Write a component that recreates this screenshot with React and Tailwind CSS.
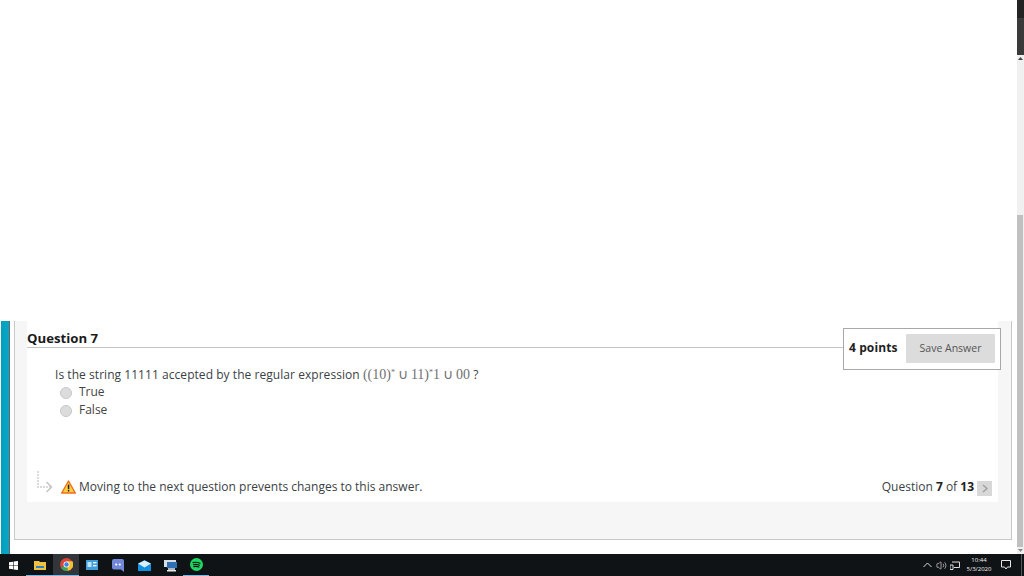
import { Volume2 } from 'lucide-react';

const font = { fontFamily: '"Open Sans", sans-serif' };

function WarningIcon() {
  return (
    <svg width="15" height="14" viewBox="0 0 15 14" className="shrink-0">
      <path d="M7.500 1 L14.300 13 H0.700 Z" fill="#fbcf45" stroke="#ef6c1a" strokeWidth="1.400" strokeLinejoin="round" />
      <rect x="6.800" y="4.600" width="1.500" height="4.600" fill="#222" />
      <rect x="6.800" y="10" width="1.500" height="1.500" fill="#222" />
    </svg>
  );
}

function ArrowMark() {
  return (
    <svg width="16" height="23" viewBox="0 0 16 23" className="shrink-0">
      <path d="M1 1 V17 H13" fill="none" stroke="#cfcfcf" strokeWidth="1.500" strokeDasharray="2 1" />
      <path d="M9.500 12 L14.500 17 L9.500 22" fill="none" stroke="#c4c4c4" strokeWidth="1.500" />
    </svg>
  );
}

function Radio() {
  return <span className="w-[12px] h-[12px] mt-[4px] -ml-[1px] rounded-full bg-[#dcdcdc] border border-[#c8c8c8] shrink-0" />;
}

function Taskbar() {
  return (
    <div className="h-[22px] bg-[#101316] flex items-center text-white">
      <div className="w-[26px] flex justify-center">
        <svg width="9" height="9" viewBox="0 0 9 9">
          <path d="M0 1.300 L4 .7 V4.200 H0 Z M4.600 .6 L9 0 V4.200 H4.600 Z M0 4.800 H4 V8.300 L0 7.700 Z M4.600 4.800 H9 V9 L4.600 8.400 Z" fill="#fff" />
        </svg>
      </div>
      <div className="w-[27px] h-full flex items-center justify-center border-b border-[#76b9ed]">
        <svg width="12" height="10" viewBox="0 0 12 10">
          <path d="M0 1 H5 L6 2 H12 V10 H0 Z" fill="#f0c040" />
          <rect x="2" y="6" width="8" height="2" fill="#2f7fc4" />
        </svg>
      </div>
      <div className="w-[26px] h-full flex items-center justify-center bg-[#32363a] border-b border-[#76b9ed]">
        <svg width="13" height="13" viewBox="0 0 14 14">
          <circle cx="7" cy="7" r="7" fill="#d8453a" />
          <path d="M7 7 L1 10.500 A7 7 0 0 0 8.500 13.800 Z" fill="#3aa757" />
          <path d="M7 3.500 H13.400 A7 7 0 0 1 8.500 13.800 Z" fill="#f3c22e" />
          <circle cx="7" cy="7" r="3.200" fill="#fff" />
          <circle cx="7" cy="7" r="2.400" fill="#3f7fe8" />
        </svg>
      </div>
      <div className="w-[26px] flex justify-center">
        <svg width="12" height="10" viewBox="0 0 12 10">
          <rect width="12" height="10" fill="#3f9fdc" />
          <rect x="1.500" y="2" width="4" height="5" fill="#bfe3f7" />
          <rect x="7" y="2" width="3.500" height="1.400" fill="#e6f5fd" />
          <rect x="7" y="5" width="3.500" height="1.400" fill="#e6f5fd" />
        </svg>
      </div>
      <div className="w-[26px] flex justify-center">
        <svg width="12" height="13" viewBox="0 0 12 13">
          <path d="M2 0 H10 A2 2 0 0 1 12 2 V13 L9 10.500 H2 A2 2 0 0 1 0 8.500 V2 A2 2 0 0 1 2 0 Z" fill="#7289da" />
          <circle cx="4.200" cy="5.500" r="1.100" fill="#fff" />
          <circle cx="7.800" cy="5.500" r="1.100" fill="#fff" />
        </svg>
      </div>
      <div className="w-[26px] flex justify-center">
        <svg width="13" height="11" viewBox="0 0 13 11">
          <path d="M0 4 L6.500 0 L13 4 V11 H0 Z" fill="#1391e0" />
          <path d="M0 3.500 L6.500 7.500 L13 3.500 L6.500 .5 Z" fill="#d9f0fc" />
        </svg>
      </div>
      <div className="w-[26px] flex justify-center">
        <svg width="13" height="13" viewBox="0 0 13 13">
          <rect x="0" y="1" width="12" height="7" fill="#d7dee6" />
          <rect x="3" y="3" width="10" height="6" fill="#2e6fb3" />
          <rect x="4" y="9" width="7" height="2" fill="#aeb6be" />
          <rect x="3" y="11" width="9" height="1.500" fill="#e8e8e8" />
        </svg>
      </div>
      <div className="w-[26px] h-full flex items-center justify-center border-b border-[#76b9ed]">
        <svg width="13" height="13" viewBox="0 0 13 13">
          <circle cx="6.500" cy="6.500" r="6.500" fill="#1ed760" />
          <path d="M3 4.600 Q6.500 3.600 10 5.200 M3.400 6.700 Q6.500 5.900 9.400 7.200 M3.800 8.600 Q6.500 8 8.900 9.100" fill="none" stroke="#101316" strokeWidth="1.100" strokeLinecap="round" />
        </svg>
      </div>
      <div className="flex-1" />
      <svg width="9" height="6" viewBox="0 0 9 6" className="mr-[4px]">
        <path d="M.5 5 L4.500 1 L8.500 5" fill="none" stroke="#ddd" strokeWidth="1" />
      </svg>
      <Volume2 size={11} strokeWidth={1.500} className="text-[#ddd] mr-[3px]" />
      <svg width="10" height="9" viewBox="0 0 10 9" className="mr-[1px]">
        <path d="M2 1 H9.500 V6.500 H4 M0 4 H3 V8.500 H0 Z" fill="none" stroke="#ddd" strokeWidth="1" />
      </svg>
      <div className="w-[36px] flex flex-col items-center text-[6px] leading-[9px] text-[#f0f0f0]" style={font}>
        <span>10:44</span>
        <span>5/3/2020</span>
      </div>
      <div className="w-[18px] flex justify-center">
        <svg width="10" height="10" viewBox="0 0 10 10">
          <path d="M.5 .5 H9.500 V7 H6.500 L5 9 L3.500 7 H.5 Z" fill="none" stroke="#e8e8e8" strokeWidth="1" />
        </svg>
      </div>
      <div className="w-[6px]" />
      <div className="w-[3px] h-full border-l border-[#555]" />
    </div>
  );
}

export default function App() {
  return (
    <div className="w-[1024px] h-[576px] flex flex-col overflow-hidden bg-white text-[#333]" style={font}>
      <div className="flex-1 flex min-h-0">
        <div className="flex-1 flex flex-col min-w-0">
          <div className="h-[321px] shrink-0" />
          <div className="flex-1 flex min-h-0">
            <div className="w-[1px] bg-white" />
            <div className="w-[9px] bg-gradient-to-r from-[#00a0c0] to-[#0aa6c4] border-r border-[#666]" />
            <div className="flex-1 flex flex-col pl-[4px] pr-[5px] min-w-0">
              <div className="h-[219px] border-l border-r border-b border-[#c8c8c8] bg-[#f6f6f6] pl-[12px] pr-[13px] flex">
                <div className="relative flex-1 h-[181px] bg-white flex flex-col">
                  <div className="pt-[8px] h-[27px] border-b border-[#c4c4c4] text-[13.200px] leading-[18px] font-bold text-[#1a1a1a]">
                    Question 7
                  </div>
                  <div className="absolute left-[816px] top-[7px] w-[158px] h-[42px] border border-[#a8a8a8] bg-white flex items-start pt-[5px] pl-[5px] gap-[9px]">
                    <span className="w-[48px] leading-[27px] text-[12px] font-bold text-[#1f1f1f] whitespace-nowrap tracking-[0.1px]">4 points</span>
                    <span className="w-[89px] h-[29px] bg-[#dcdcdc] rounded-[1px] flex items-center justify-center text-[10.500px] text-[#555]">
                      Save Answer
                    </span>
                  </div>
                  <div className="pl-[28px] mt-[18px] text-[12px] leading-[18px] whitespace-nowrap text-[#3a3f45] tracking-[0.05px]">
                    Is the string 11111 accepted by the regular expression{' '}
                    <span className="text-[#707070] text-[14px] tracking-normal" style={{ fontFamily: '"Liberation Serif", serif' }}>
                      ((10)<sup className="text-[8px] top-[-4px]">*</sup><span className="mx-[3px]">∪</span>11)<sup className="text-[8px] top-[-4px]">*</sup>1<span className="mx-[3px]">∪</span>00
                    </span>{' '}
                    ?
                  </div>
                  <div className="pl-[34px] -mt-[1px] flex flex-col text-[12px] leading-[18px] text-[#444]">
                    <label className="flex items-start gap-[7px]">
                      <Radio />
                      <span>True</span>
                    </label>
                    <label className="flex items-start gap-[7px]">
                      <Radio />
                      <span>False</span>
                    </label>
                  </div>
                  <div className="mt-auto h-[32px] flex pl-[10px] pr-[6px]">
                    <ArrowMark />
                    <div className="flex-1 flex items-center h-[34px] pl-[8px]">
                      <WarningIcon />
                      <span className="ml-[3px] text-[12px] text-[#3a3f45]">
                        Moving to the next question prevents changes to this answer.
                      </span>
                      <span className="ml-auto text-[12px] text-[#3a3f45] whitespace-nowrap">
                        Question <b className="text-[#222]">7</b> of <b className="text-[#222]">13</b>
                      </span>
                      <span className="ml-[3px] w-[15px] h-[15px] mt-[2px] bg-[#d8d8d8] flex items-center justify-center">
                        <svg width="6" height="9" viewBox="0 0 6 9">
                          <path d="M1 1 L5 4.500 L1 8" fill="none" stroke="#a0a0a0" strokeWidth="1.500" />
                        </svg>
                      </span>
                    </div>
                  </div>
                </div>
              </div>
            </div>
          </div>
        </div>
        <div className="w-[7px] flex flex-col bg-[#f0f0f0]">
          <div className="h-[18px] bg-[#232323]" />
          <div className="h-[37px] bg-[#3a3a3a]" />
          <div className="h-[6px] flex items-center justify-center text-[#444]">
            <svg width="5" height="3" viewBox="0 0 5 3"><path d="M2.500 0 L5 3 H0 Z" fill="#444" /></svg>
          </div>
          <div className="h-[154px]" />
          <div className="flex-1 bg-[#c0c0c0] mr-[1px]" />
          <div className="h-[7px] flex items-center justify-center">
            <svg width="5" height="3" viewBox="0 0 5 3"><path d="M0 0 H5 L2.500 3 Z" fill="#888" /></svg>
          </div>
        </div>
      </div>
      <Taskbar />
    </div>
  );
}
